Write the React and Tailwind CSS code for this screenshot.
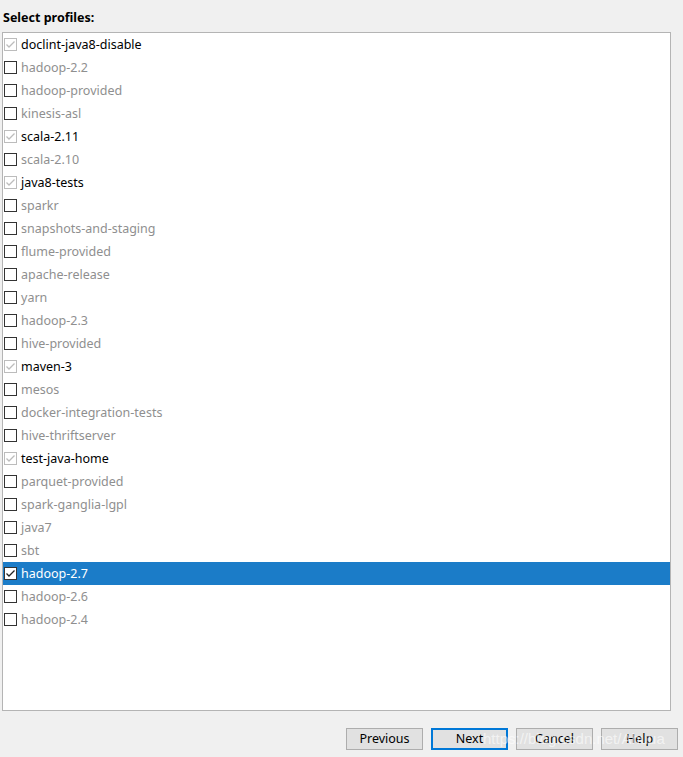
const profiles = [
  ["doclint-java8-disable", "locked"],
  ["hadoop-2.2", "off"],
  ["hadoop-provided", "off"],
  ["kinesis-asl", "off"],
  ["scala-2.11", "locked"],
  ["scala-2.10", "off"],
  ["java8-tests", "locked"],
  ["sparkr", "off"],
  ["snapshots-and-staging", "off"],
  ["flume-provided", "off"],
  ["apache-release", "off"],
  ["yarn", "off"],
  ["hadoop-2.3", "off"],
  ["hive-provided", "off"],
  ["maven-3", "locked"],
  ["mesos", "off"],
  ["docker-integration-tests", "off"],
  ["hive-thriftserver", "off"],
  ["test-java-home", "locked"],
  ["parquet-provided", "off"],
  ["spark-ganglia-lgpl", "off"],
  ["java7", "off"],
  ["sbt", "off"],
  ["hadoop-2.7", "on"],
  ["hadoop-2.6", "off"],
  ["hadoop-2.4", "off"],
];

function Check({ state }) {
  if (state === "off") {
    return <span className="w-[13px] h-[13px] border border-[#333333] bg-white shrink-0" />;
  }
  const locked = state === "locked";
  return (
    <span
      className={
        "w-[13px] h-[13px] border shrink-0 flex items-center justify-center " +
        (locked ? "border-[#bcbcbc] bg-white" : "border-[#333333] bg-white")
      }
    >
      <svg width="11" height="11" viewBox="0 0 11 11">
        <path
          d="M1.5 5.5 L4 8 L9.5 2.5"
          fill="none"
          stroke={locked ? "#bcbcbc" : "#222222"}
          strokeWidth="1.3"
        />
      </svg>
    </span>
  );
}

function Row({ name, state }) {
  const selected = state === "on";
  const text = selected ? "text-white" : state === "locked" ? "text-black" : "text-[#8f8f8f]";
  return (
    <div className={"h-[23px] flex items-center pl-[1px] gap-[4px] " + (selected ? "bg-[#1b7cc8]" : "")}>
      <Check state={state} />
      <span className={"text-[12.5px] leading-none pt-[1px] " + text}>{name}</span>
    </div>
  );
}

function Button({ label, primary }) {
  return (
    <button
      className={
        "w-[77px] h-[22px] text-[12.5px] text-black bg-[#e1e1e1] border " +
        (primary ? "border-[#0078d7] border-2" : "border-[#adadad]")
      }
    >
      {label}
    </button>
  );
}

export default function App() {
  return (
    <div
      className="w-[683px] h-[757px] bg-[#f0f0f0] flex flex-col relative overflow-hidden"
      style={{ fontFamily: '"Noto Sans", "Open Sans", sans-serif' }}
    >
      <div className="pt-[9px] pl-[3px] h-[32px] text-[12.5px] font-bold text-black leading-[18px]">
        Select profiles:
      </div>
      <div className="ml-[2px] w-[669px] h-[679px] border border-[#b4b4b4] bg-white">
        {profiles.map(([name, state]) => (
          <Row key={name} name={name} state={state} />
        ))}
      </div>
      <div className="flex justify-end gap-[8px] pr-[5px] mt-[17px]">
        <Button label="Previous" />
        <Button label="Next" primary />
        <Button label="Cancel" />
        <Button label="Help" />
      </div>
      <div
        className="absolute left-[483px] top-[730px] text-[15px] text-white/60 leading-[18px] whitespace-nowrap pointer-events-none"
        style={{ fontFamily: '"Liberation Sans", Arial, sans-serif' }}
      >
        https://blog.csdn.net/Ahuua
      </div>
    </div>
  );
}
